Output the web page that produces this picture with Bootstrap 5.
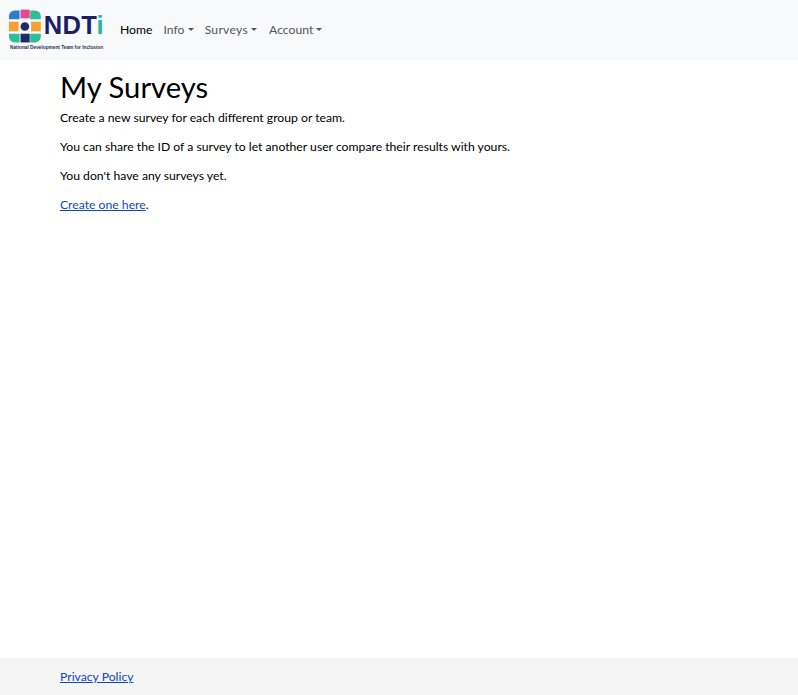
<!DOCTYPE html>
<html lang="en">
<head>
<meta charset="utf-8">
<title>My Surveys</title>
<link href="https://cdn.jsdelivr.net/npm/bootstrap@5.3.0/dist/css/bootstrap.min.css" rel="stylesheet">
<style>
html,body{height:100%}
body{font-family:"Lato","Noto Sans",sans-serif;font-size:12.2px;color:#000;display:flex;flex-direction:column;min-height:695px;overflow:hidden}
.topbar{height:60px;background:#f8f9fa;padding:0 8px!important}
.brandbox{display:flex;flex-direction:column;width:96px;margin-right:10px;padding:0;text-decoration:none}
.brandrow{display:flex;align-items:center;gap:2px;height:34px}
.brandname{font:700 25.500px/1 "Liberation Sans",sans-serif;color:#1b1f66;letter-spacing:.3px}
.brandname span{color:#2bb5a0}
.brandtag{font:700 4.750px/1 "Liberation Sans",sans-serif;color:#2b3050;margin:3px 0 0 2px;white-space:nowrap}
.toplink{font-size:12.2px;padding:0 6px!important;color:#555!important;line-height:20px}
.toplink.current{color:#000!important;padding-right:5px!important}
.toplink.tightlink{padding-right:5px!important}
.toplink.widelink{letter-spacing:.25px}
.wrapbox{padding-left:60px;flex:1}
.pagetitle{font-size:29.2px;font-weight:400;line-height:36px;margin:9px 0 3px}
.wrapbox p{margin-bottom:9.400px;line-height:19.6px}
.wrapbox a,.footbar a{color:#0d47c4}
.footbar{height:37px;background:#f5f5f5;padding:2px 0 0 60px;display:flex;align-items:center}
</style>
</head>
<body>
<nav class="navbar navbar-expand topbar">
  <a class="brandbox" href="#">
    <span class="brandrow">
      <svg width="35" height="35" viewBox="0 0 35 35" aria-hidden="true">
        <path d="M1 10V7a6 6 0 0 1 6-6h5v9z" fill="#2a7fc9"/>
        <rect x="13" y="0" width="9.500" height="9" fill="#e8468f"/>
        <path d="M23 1h5a6 6 0 0 1 6 6v3H23z" fill="#2dbd9b"/>
        <rect x="1" y="12.500" width="10" height="10" fill="#f5a02f"/>
        <rect x="24" y="12.500" width="10" height="10" fill="#f5a02f"/>
        <circle cx="17.500" cy="17.500" r="4.500" fill="#1f2a6b"/>
        <path d="M1 25h11v9H7a6 6 0 0 1-6-6z" fill="#2dbd9b"/>
        <rect x="13" y="25" width="9.500" height="9" fill="#1f2a6b"/>
        <path d="M23 25h11v3a6 6 0 0 1-6 6h-5z" fill="#2dbd9b"/>
      </svg>
      <span class="brandname">NDT<span>i</span></span>
    </span>
    <span class="brandtag">National Development Team for Inclusion</span>
  </a>
  <ul class="navbar-nav">
    <li class="nav-item"><a class="nav-link toplink current" href="#">Home</a></li>
    <li class="nav-item dropdown"><a class="nav-link toplink tightlink dropdown-toggle" href="#" data-bs-toggle="dropdown">Info</a></li>
    <li class="nav-item dropdown"><a class="nav-link toplink widelink dropdown-toggle" href="#" data-bs-toggle="dropdown">Surveys</a></li>
    <li class="nav-item dropdown"><a class="nav-link toplink dropdown-toggle" href="#" data-bs-toggle="dropdown">Account</a></li>
  </ul>
</nav>
<main class="wrapbox">
  <h1 class="pagetitle">My Surveys</h1>
  <p>Create a new survey for each different group or team.</p>
  <p>You can share the ID of a survey to let another user compare their results with yours.</p>
  <p>You don't have any surveys yet.</p>
  <p><a href="#">Create one here</a>.</p>
</main>
<footer class="footbar"><a href="#">Privacy Policy</a></footer>
<script src="https://cdn.jsdelivr.net/npm/bootstrap@5.3.0/dist/js/bootstrap.bundle.min.js"></script>
</body>
</html>
